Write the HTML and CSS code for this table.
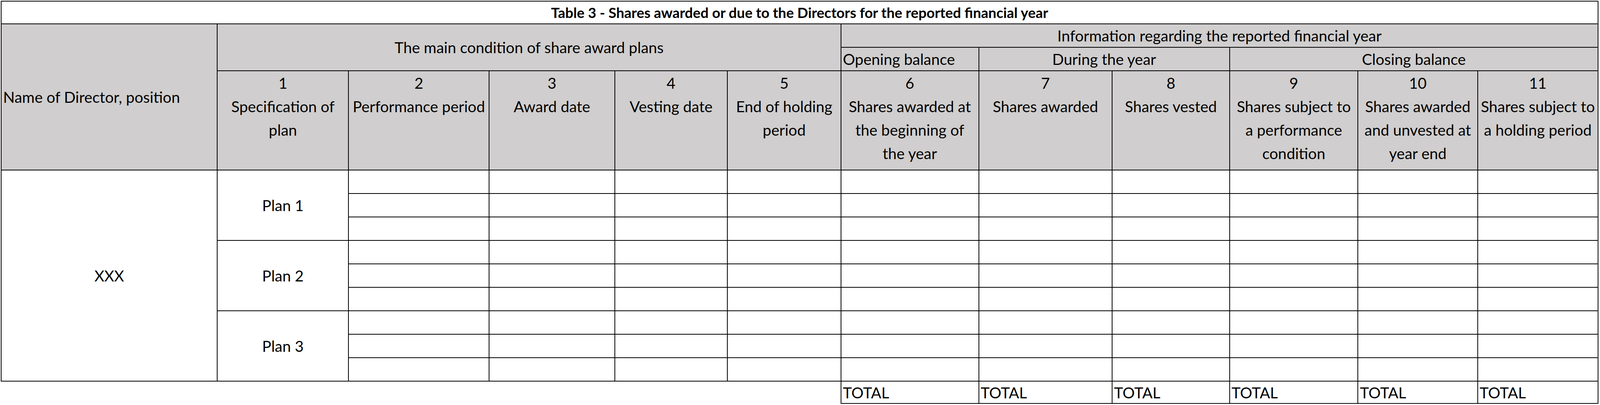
FILE: index.html
```html
<!DOCTYPE html>
<html lang="en">
<head>
<meta charset="utf-8">
<title>Table 3 - Shares awarded or due to the Directors</title>
<link rel="stylesheet" href="styles.css">
</head>
<body>
<table class="sheet">
  <colgroup>
    <col class="w-name"><col class="w-1"><col class="w-2"><col class="w-3"><col class="w-4"><col class="w-5"><col class="w-6"><col class="w-7"><col class="w-8"><col class="w-9"><col class="w-10"><col class="w-11">
  </colgroup>
  <tr class="row-title">
    <th class="title" colspan="12">Table 3 - Shares awarded or due to the Directors for the reported financial year</th>
  </tr>
  <tr class="row-group">
    <th class="hd name" rowspan="3">Name of Director, position</th>
    <th class="hd" colspan="5" rowspan="2">The main condition of share award plans</th>
    <th class="hd" colspan="6">Information regarding the reported financial year</th>
  </tr>
  <tr class="row-group">
    <th class="hd left">Opening balance</th>
    <th class="hd" colspan="2">During the year</th>
    <th class="hd" colspan="3">Closing balance</th>
  </tr>
  <tr class="row-cols">
    <th class="hd col">1<br>Specification of<br>plan</th>
    <th class="hd col">2<br>Performance period</th>
    <th class="hd col">3<br>Award date</th>
    <th class="hd col">4<br>Vesting date</th>
    <th class="hd col">5<br>End of holding<br>period</th>
    <th class="hd col">6<br>Shares awarded at<br>the beginning of<br>the year</th>
    <th class="hd col">7<br>Shares awarded</th>
    <th class="hd col">8<br>Shares vested</th>
    <th class="hd col">9<br>Shares subject to<br>a performance<br>condition</th>
    <th class="hd col">10<br>Shares awarded<br>and unvested at<br>year end</th>
    <th class="hd col">11<br>Shares subject to<br>a holding period</th>
  </tr>
  <tr class="row-data">
    <td class="cell mid" rowspan="9">XXX</td>
    <td class="cell mid" rowspan="3">Plan 1</td>
    <td></td><td></td><td></td><td></td><td></td><td></td><td></td><td></td><td></td><td></td>
  </tr>
  <tr class="row-data"><td></td><td></td><td></td><td></td><td></td><td></td><td></td><td></td><td></td><td></td></tr>
  <tr class="row-data"><td></td><td></td><td></td><td></td><td></td><td></td><td></td><td></td><td></td><td></td></tr>
  <tr class="row-data">
    <td class="cell mid" rowspan="3">Plan 2</td>
    <td></td><td></td><td></td><td></td><td></td><td></td><td></td><td></td><td></td><td></td>
  </tr>
  <tr class="row-data"><td></td><td></td><td></td><td></td><td></td><td></td><td></td><td></td><td></td><td></td></tr>
  <tr class="row-data"><td></td><td></td><td></td><td></td><td></td><td></td><td></td><td></td><td></td><td></td></tr>
  <tr class="row-data">
    <td class="cell mid" rowspan="3">Plan 3</td>
    <td></td><td></td><td></td><td></td><td></td><td></td><td></td><td></td><td></td><td></td>
  </tr>
  <tr class="row-data"><td></td><td></td><td></td><td></td><td></td><td></td><td></td><td></td><td></td><td></td></tr>
  <tr class="row-data"><td></td><td></td><td></td><td></td><td></td><td></td><td></td><td></td><td></td><td></td></tr>
  <tr class="row-total">
    <td class="blank" colspan="6"></td>
    <td class="total">TOTAL</td>
    <td class="total">TOTAL</td>
    <td class="total">TOTAL</td>
    <td class="total">TOTAL</td>
    <td class="total">TOTAL</td>
    <td class="total">TOTAL</td>
  </tr>
</table>
</body>
</html>
```

FILE: styles.css
```css
html, body {
  margin: 0;
  padding: 0;
  background: #ffffff;
}

body {
  font-family: Lato, "Open Sans", "Liberation Sans", sans-serif;
  color: #000000;
}

.sheet {
  border-collapse: collapse;
  table-layout: fixed;
  margin: 2px 0 0 2px;
  width: calc(100% - 6px);
  font-size: 39px;
  line-height: 48px;
}

.w-name { width: 13.533%; }
.w-1 { width: 8.22%; }
.w-2 { width: 8.81%; }
.w-3 { width: 7.857%; }
.w-4 { width: 7.062%; }
.w-5 { width: 7.107%; }
.w-6 { width: 8.629%; }
.w-7 { width: 8.356%; }
.w-8 { width: 7.357%; }
.w-9 { width: 8.038%; }
.w-10 { width: 7.493%; }
.w-11 { width: 7.539%; }

.sheet th,
.sheet td {
  border: 2px solid #000000;
  padding: 0;
  white-space: nowrap;
  background: #ffffff;
}

.row-title { height: 58px; }
.row-group { height: 60px; }
.row-cols { height: 254px; }
.row-data { height: 60px; }
.row-total { height: 57px; }

.title {
  font-size: 36.5px;
  font-weight: 700;
  text-align: center;
  vertical-align: middle;
}

.sheet .hd {
  background: #d0cece;
  font-weight: 400;
  text-align: center;
  vertical-align: middle;
}

.sheet .hd.name {
  text-align: left;
  padding-left: 4px;
}

.sheet .hd.left {
  text-align: left;
  padding-left: 4px;
}

.sheet .hd.col {
  vertical-align: top;
  line-height: 60px;
}

.cell.mid {
  text-align: center;
  vertical-align: middle;
}

.sheet .total {
  text-align: left;
  vertical-align: middle;
  padding-left: 4px;
}

.sheet td.blank {
  border: none;
  background: transparent;
}
```
